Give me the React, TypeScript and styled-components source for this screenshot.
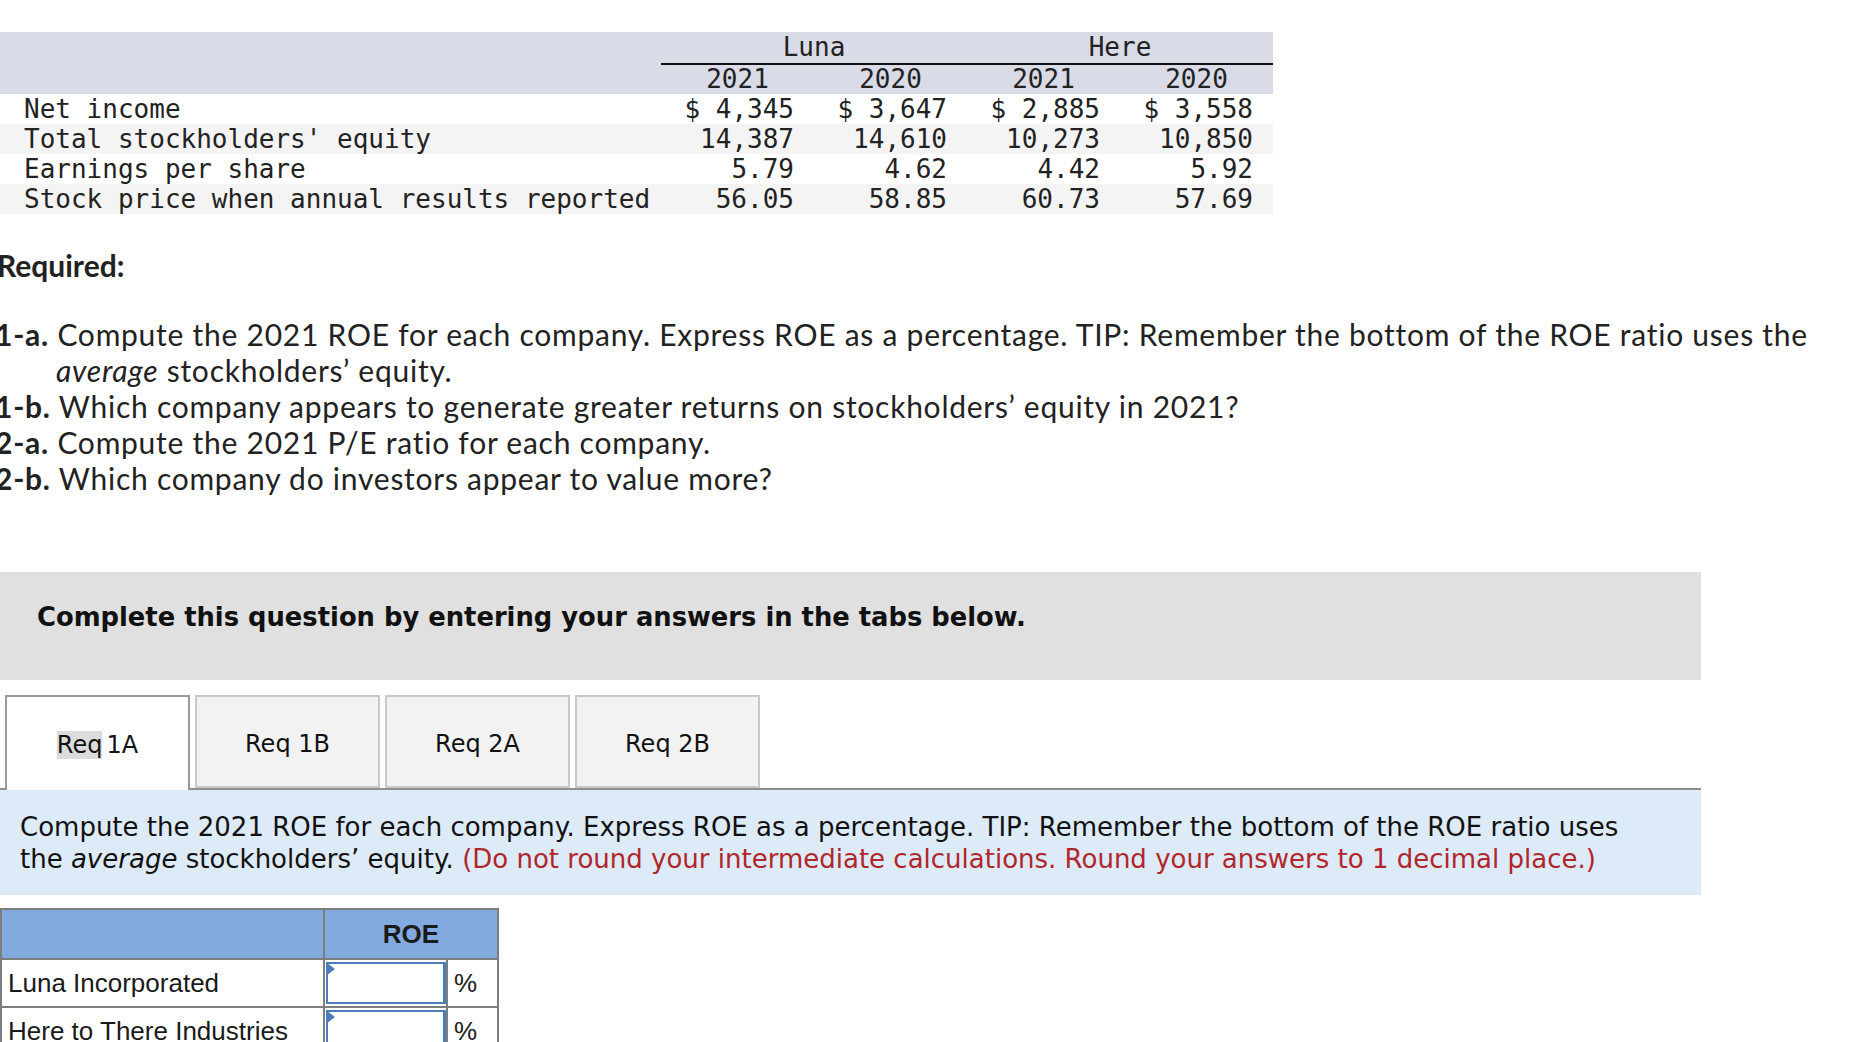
import styled, { createGlobalStyle } from 'styled-components'

const GlobalStyle = createGlobalStyle`
    html, body {
        margin: 0;
        padding: 0;
        background: #ffffff;
    }
    body {
        font-family: 'Lato', 'Liberation Sans', sans-serif;
        color: #222222;
        overflow: hidden;
    }
`

const rows = [
    { label: 'Net income', values: ['$ 4,345', '$ 3,647', '$ 2,885', '$ 3,558'] },
    { label: "Total stockholders' equity", values: ['14,387', '14,610', '10,273', '10,850'] },
    { label: 'Earnings per share', values: ['5.79', '4.62', '4.42', '5.92'] },
    { label: 'Stock price when annual results reported', values: ['56.05', '58.85', '60.73', '57.69'] },
]

const years = ['2021', '2020', '2021', '2020']
const tabs = ['Req 1A', 'Req 1B', 'Req 2A', 'Req 2B']

export default function App() {
    return (
        <Page>
            <GlobalStyle />
            <DataTable>
                <HeadBand>
                    <CompanyRow>
                        <div />
                        <CompanyCell>Luna</CompanyCell>
                        <CompanyCell>Here</CompanyCell>
                    </CompanyRow>
                    <YearRow>
                        <div />
                        {years.map((year, i) => (
                            <YearCell key={i}>{year}</YearCell>
                        ))}
                    </YearRow>
                </HeadBand>
                {rows.map((row, i) => (
                    <DataRow key={row.label} $shaded={i % 2 === 1}>
                        <LabelCell>{row.label}</LabelCell>
                        {row.values.map((value, j) => (
                            <ValueCell key={j}>{value}</ValueCell>
                        ))}
                    </DataRow>
                ))}
            </DataTable>

            <Required>Required:</Required>
            <Questions>
                <Question>
                    <b>1-a.</b> Compute the 2021 ROE for each company. Express ROE as a percentage. TIP: Remember the
                    bottom of the ROE ratio uses the <i>average</i> stockholders’ equity.
                </Question>
                <Question>
                    <b>1-b.</b> Which company appears to generate greater returns on stockholders’ equity in 2021?
                </Question>
                <Question>
                    <b>2-a.</b> Compute the 2021 P/E ratio for each company.
                </Question>
                <Question>
                    <b>2-b.</b> Which company do investors appear to value more?
                </Question>
            </Questions>

            <Banner>Complete this question by entering your answers in the tabs below.</Banner>

            <TabBar>
                {tabs.map((tab, i) => (
                    <Tab key={tab} $active={i === 0}>
                        {i === 0 ? (
                            <>
                                <Highlight>Req</Highlight> 1A
                            </>
                        ) : (
                            tab
                        )}
                    </Tab>
                ))}
            </TabBar>

            <Instructions>
                Compute the 2021 ROE for each company. Express ROE as a percentage. TIP: Remember the bottom of the ROE
                ratio uses the <i>average</i> stockholders’ equity.{' '}
                <Warning>(Do not round your intermediate calculations. Round your answers to 1 decimal place.)</Warning>
            </Instructions>

            <AnswerTable>
                <thead>
                    <tr>
                        <AnswerHead />
                        <AnswerHead colSpan={2}>ROE</AnswerHead>
                    </tr>
                </thead>
                <tbody>
                    {['Luna Incorporated', 'Here to There Industries'].map((name) => (
                        <tr key={name}>
                            <NameCell>{name}</NameCell>
                            <InputCell>
                                <InputBox>
                                    <Marker />
                                </InputBox>
                            </InputCell>
                            <UnitCell>%</UnitCell>
                        </tr>
                    ))}
                </tbody>
            </AnswerTable>
        </Page>
    )
}

const Page = styled.div`
    width: 1864px;
    height: 1042px;
    padding-top: 32px;
    box-sizing: border-box;
    overflow: hidden;
`

const DataTable = styled.div`
    width: 1273px;
    font-family: 'DejaVu Sans Mono', 'Liberation Mono', monospace;
    font-size: 26px;
    color: #222222;
`

const HeadBand = styled.div`
    background: #d9dce6;
`

const CompanyRow = styled.div`
    display: grid;
    grid-template-columns: 661px 306px 306px;
    height: 33px;
`

const CompanyCell = styled.div`
    text-align: center;
    line-height: 30px;
    border-bottom: 2px solid #111111;
`

const YearRow = styled.div`
    display: grid;
    grid-template-columns: 661px repeat(4, 153px);
    height: 29px;
`

const YearCell = styled.div`
    text-align: center;
    line-height: 29px;
`

const DataRow = styled.div<{ $shaded: boolean }>`
    display: grid;
    grid-template-columns: 661px repeat(4, 153px);
    height: 30px;
    line-height: 30px;
    background: ${(p) => (p.$shaded ? '#f4f4f4' : 'transparent')};
`

const LabelCell = styled.div`
    padding-left: 24px;
    white-space: pre;
`

const ValueCell = styled.div`
    text-align: right;
    padding-right: 20px;
    white-space: pre;
`

const Required = styled.div`
    margin: 33px 0 0 -3px;
    font-size: 30px;
    line-height: 36px;
    font-weight: 700;
`

const Questions = styled.div`
    margin: 33px 0 0 -5px;
    width: 1860px;
    font-size: 30px;
    line-height: 36px;
    letter-spacing: 0.75px;
`

const Question = styled.div`
    padding-left: 61px;
    text-indent: -61px;
    b {
        font-weight: 700;
    }
`

const Banner = styled.div`
    margin-top: 76px;
    width: 1701px;
    height: 108px;
    box-sizing: border-box;
    padding: 30px 0 0 37px;
    background: #e0e0e0;
    font-family: 'DejaVu Sans', Verdana, sans-serif;
    font-size: 25.8px;
    font-weight: 700;
    color: #111111;
`

const TabBar = styled.div`
    display: flex;
    gap: 5px;
    margin-top: 15px;
    padding-left: 5px;
    width: 1701px;
    box-sizing: border-box;
    border-bottom: 2px solid #8f8f8f;
`

const Tab = styled.div<{ $active: boolean }>`
    width: 185px;
    box-sizing: border-box;
    margin-bottom: ${(p) => (p.$active ? '-2px' : '0')};
    height: ${(p) => (p.$active ? '95px' : '93px')};
    padding-top: 5px;
    padding-bottom: ${(p) => (p.$active ? '2px' : '0')};
    display: flex;
    align-items: center;
    justify-content: center;
    background: ${(p) => (p.$active ? '#ffffff' : '#f2f2f2')};
    border: 2px solid ${(p) => (p.$active ? '#9a9a9a' : '#c9c9c9')};
    border-bottom: ${(p) => (p.$active ? 'none' : '2px solid #c9c9c9')};
    font-family: 'DejaVu Sans', Verdana, sans-serif;
    font-size: 24px;
    color: #111111;
`

const Highlight = styled.span`
    background: #dcdcdc;
    margin-right: 4px;
`

const Instructions = styled.div`
    width: 1701px;
    box-sizing: border-box;
    padding: 21px 40px 20px 20px;
    background: #ddeaf7;
    font-family: 'DejaVu Sans', Verdana, sans-serif;
    font-size: 26px;
    line-height: 32px;
    color: #111111;
`

const Warning = styled.span`
    color: #b1262b;
`

const AnswerTable = styled.table`
    margin-top: 13px;
    border-collapse: collapse;
    font-family: 'Liberation Sans', Arial, sans-serif;
    font-size: 26px;
    color: #1a1a1a;
`

const AnswerHead = styled.th`
    height: 48px;
    padding: 0;
    background: #82aadf;
    border: 2px solid #7d7d7d;
    font-weight: 700;
    text-align: center;
    &:first-child {
        width: 321px;
    }
`

const NameCell = styled.td`
    height: 46px;
    padding: 0 0 0 6px;
    border: 2px solid #7d7d7d;
    white-space: nowrap;
`

const InputCell = styled.td`
    width: 121px;
    padding: 0;
    border: 2px solid #7d7d7d;
`

const InputBox = styled.div`
    position: relative;
    height: 38px;
    margin: 1px 0 1px 1px;
    border: 2px solid #4a7ebb;
    border-right-width: 3px;
    background: #ffffff;
`

const Marker = styled.div`
    position: absolute;
    top: -2px;
    left: -2px;
    width: 0;
    height: 0;
    border-top: 7px solid transparent;
    border-bottom: 7px solid transparent;
    border-left: 9px solid #4a7ebb;
`

const UnitCell = styled.td`
    width: 51px;
    padding: 0 0 0 6px;
    border: 2px solid #7d7d7d;
    box-sizing: border-box;
`
